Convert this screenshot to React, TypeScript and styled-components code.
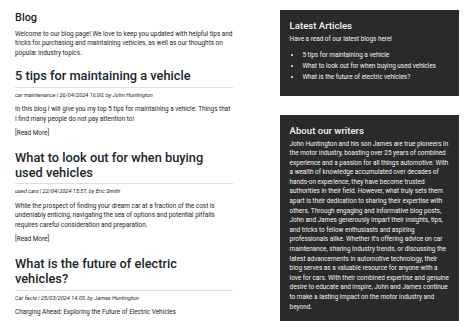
import React from "react";
import styled, { createGlobalStyle } from "styled-components";

const Global = createGlobalStyle`
  html, body { margin: 0; padding: 0; background: #ffffff; }
  body { font-family: Roboto, "Liberation Sans", Arial, sans-serif; color: #212529; }
  * { box-sizing: border-box; }
`;

const Page = styled.div`
  display: flex;
  align-items: flex-start;
  padding: 10.6px 15px 0 15px;
  gap: 47px;
  width: 474px;
  height: 321px;
  overflow: hidden;
`;

const Main = styled.main`
  width: 218px;
  flex: none;
`;

const Side = styled.aside`
  width: 179px;
  flex: none;
  display: flex;
  flex-direction: column;
  gap: 19px;
  margin-top: -0.6px;
`;

const PageTitle = styled.h1`
  font-size: 10.9px;
  font-weight: 500;
  line-height: 13.2px;
  margin: 0 0 6px 0;
`;

const Text = styled.p<{ $gap?: number }>`
  font-size: 6.4px;
  line-height: 9.6px;
  margin: 0 0 ${(p) => p.$gap ?? 4.8}px 0;
`;

const Article = styled.article``;

const PostTitle = styled.h2`
  font-size: 12.8px;
  font-weight: 500;
  line-height: 15.36px;
  margin: 0;
  padding: 0 0 3px 0;
  border-bottom: 0.5px solid #dedede;
`;

const Meta = styled.p`
  font-size: 5.6px;
  font-style: italic;
  line-height: 8.4px;
  margin: 3px 0 6px 0;
`;

const ReadMore = styled.a`
  display: block;
  font-size: 6.4px;
  line-height: 9.6px;
  color: #212529;
  text-decoration: none;
  margin-bottom: 11px;
`;

const Card = styled.section`
  background: #2a2a2a;
  color: #f4f4f4;
  padding: 9.8px 9.6px 9.6px 9.6px;
`;

const CardTitle = styled.h3`
  font-size: 9.6px;
  font-weight: 500;
  line-height: 11.52px;
  margin: 0 0 3.3px 0;
`;

const CardText = styled.p<{ $gap?: number }>`
  font-size: 6.4px;
  line-height: 9.6px;
  margin: 0 0 ${(p) => p.$gap ?? 0}px 0;
`;

const List = styled.ul`
  margin: 0 0 3.2px 0;
  padding-left: 12.8px;
  font-size: 6.4px;
  line-height: 11.2px;
`;

const posts = [
  {
    title: "5 tips for maintaining a vehicle",
    meta: "car maintenance | 26/04/2024 16:00, by John Huntington",
    body: "In this blog I will give you my top 5 tips for maintaining a vehicle. Things that I find many people do not pay attention to!",
    more: true,
  },
  {
    title: "What to look out for when buying used vehicles",
    meta: "used cars | 22/04/2024 15:57, by Eric Smith",
    body: "While the prospect of finding your dream car at a fraction of the cost is undeniably enticing, navigating the sea of options and potential pitfalls requires careful consideration and preparation.",
    more: true,
  },
  {
    title: "What is the future of electric vehicles?",
    meta: "Car facts | 25/03/2024 14:05, by James Huntington",
    body: "Charging Ahead: Exploring the Future of Electric Vehicles",
    more: false,
  },
];

const latest = [
  "5 tips for maintaining a vehicle",
  "What to look out for when buying used vehicles",
  "What is the future of electric vehicles?",
];

export default function App() {
  return (
    <>
      <Global />
      <Page>
        <Main>
          <PageTitle>Blog</PageTitle>
          <Text $gap={9.8}>
            Welcome to our blog page! We love to keep you updated with helpful tips and tricks for purchasing and
            maintaining vehicles, as well as our thoughts on popular industry topics.
          </Text>
          {posts.map((p) => (
            <Article key={p.title}>
              <PostTitle>{p.title}</PostTitle>
              <Meta>{p.meta}</Meta>
              <Text>{p.body}</Text>
              {p.more && <ReadMore href="#">[Read More]</ReadMore>}
            </Article>
          ))}
        </Main>
        <Side>
          <Card>
            <CardTitle>Latest Articles</CardTitle>
            <CardText $gap={5.3}>Have a read of our latest blogs here!</CardText>
            <List>
              {latest.map((l) => (
                <li key={l}>{l}</li>
              ))}
            </List>
          </Card>
          <Card>
            <CardTitle>About our writers</CardTitle>
            <CardText>
              John Huntington and his son James are true pioneers in the motor industry, boasting over 25 years of
              combined experience and a passion for all things automotive. With a wealth of knowledge accumulated over
              decades of hands-on experience, they have become trusted authorities in their field. However, what truly
              sets them apart is their dedication to sharing their expertise with others. Through engaging and
              informative blog posts, John and James generously impart their insights, tips, and tricks to fellow
              enthusiasts and aspiring professionals alike. Whether it's offering advice on car maintenance, sharing
              industry trends, or discussing the latest advancements in automotive technology, their blog serves as a
              valuable resource for anyone with a love for cars. With their combined expertise and genuine desire to
              educate and inspire, John and James continue to make a lasting impact on the motor industry and beyond.
            </CardText>
          </Card>
        </Side>
      </Page>
    </>
  );
}
